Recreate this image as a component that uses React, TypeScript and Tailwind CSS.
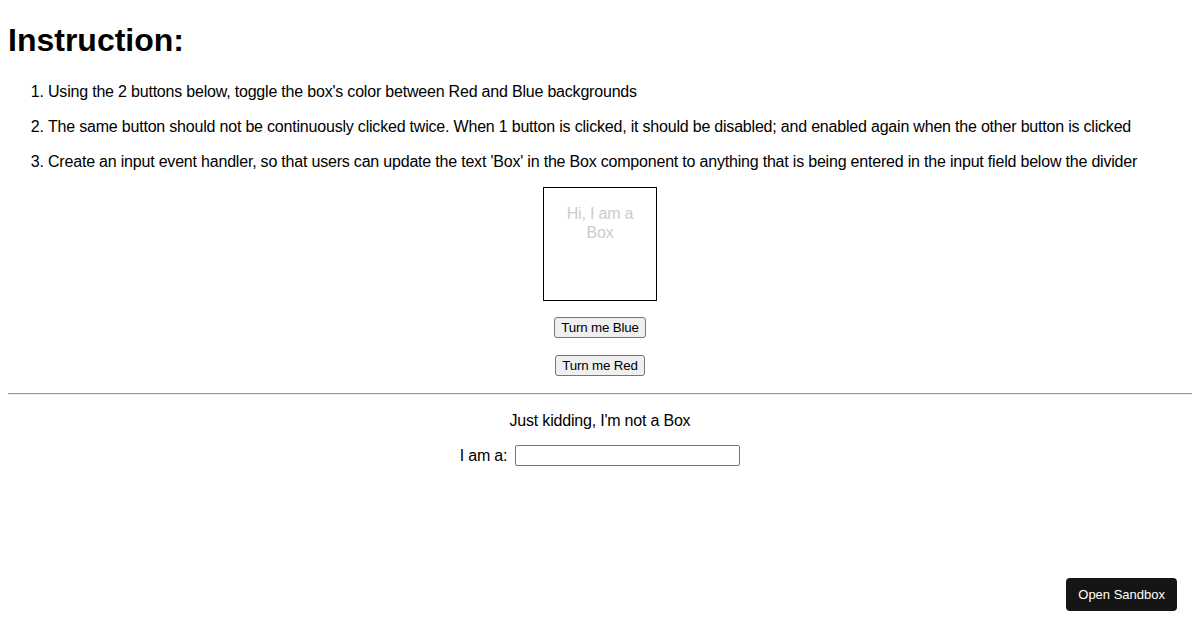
import React, { useState } from 'react';

export default function App() {
  const [color, setColor] = useState<'none' | 'blue' | 'red'>('none');
  const [text, setText] = useState('');

  const boxBg = color === 'blue' ? 'bg-blue-600' : color === 'red' ? 'bg-red-600' : 'bg-white';

  return (
    <div className="min-h-[630px] px-[8px] pt-px font-['Liberation_Sans',Arial,sans-serif] text-[16px] leading-[19px] tracking-[-0.2px] text-black">
      <h1 className="mt-[21.44px] mb-[22.44px] text-[32px] font-bold leading-[37px] tracking-normal">Instruction:</h1>
      <ol className="list-decimal pl-[40px]">
        <li>
          <p className="my-[16px]">
            Using the 2 buttons below, toggle the box's color between Red and Blue backgrounds
          </p>
        </li>
        <li>
          <p className="my-[16px]">
            The same button should not be continuously clicked twice. When 1 button is clicked, it should be disabled;
            and enabled again when the other button is clicked
          </p>
        </li>
        <li>
          <p className="my-[16px]">
            Create an input event handler, so that users can update the text 'Box' in the Box component to anything
            that is being entered in the input field below the divider
          </p>
        </li>
      </ol>

      <div
        className={`mx-auto h-[114px] w-[114px] border border-black p-[16px] text-center text-[#cccccc] ${boxBg}`}
      >
        Hi, I am a {text || 'Box'}
      </div>

      <p className="my-[16px] flex h-[22px] items-center justify-center">
        <button
          disabled={color === 'blue'}
          onClick={() => setColor('blue')}
          className="h-[21px] rounded-[3px] border border-[#767676] bg-[#efefef] px-[6px] text-[13.33px] leading-[15px] tracking-[-0.15px]"
        >
          Turn me Blue
        </button>
      </p>
      <p className="my-[16px] flex h-[22px] items-center justify-center">
        <button
          disabled={color === 'red'}
          onClick={() => setColor('red')}
          className="h-[21px] rounded-[3px] border border-[#767676] bg-[#efefef] px-[6px] text-[13.33px] leading-[15px] tracking-[-0.15px]"
        >
          Turn me Red
        </button>
      </p>

      <hr className="my-[8px] border-t border-b border-t-[#9a9a9a] border-b-[#eeeeee]" />

      <p className="my-[16px] text-center">Just kidding, I'm not a Box</p>
      <p className="my-[16px] flex h-[19px] items-center justify-center">
        <label htmlFor="box-input" className="mr-[8px]">
          I am a:
        </label>
        <input
          id="box-input"
          value={text}
          onChange={(e) => setText(e.target.value)}
          className="h-[21px] w-[225px] rounded-[2px] border border-[#767676] px-[2px] text-[13.33px]"
        />
      </p>

      <button className="fixed right-[23px] bottom-[19px] h-[33px] rounded-[4px] bg-[#151515] px-[12px] text-[13px] tracking-normal text-white">
        Open Sandbox
      </button>
    </div>
  );
}
